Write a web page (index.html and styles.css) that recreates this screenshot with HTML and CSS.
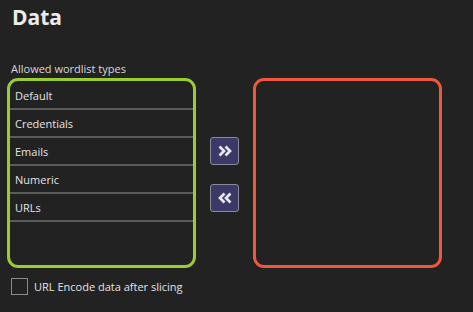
FILE: index.html
```html
<!DOCTYPE html>
<html>
<head>
<meta charset="utf-8">
<link rel="stylesheet" href="styles.css">
</head>
<body>
<div class="page">
  <h1 class="title">Data</h1>
  <div class="label">Allowed wordlist types</div>
  <div class="lists">
    <div class="box box-allowed">
      <div class="item">Default</div>
      <div class="item">Credentials</div>
      <div class="item">Emails</div>
      <div class="item">Numeric</div>
      <div class="item">URLs</div>
    </div>
    <div class="moves">
      <button class="move">
        <svg width="14" height="12" viewBox="0 0 14 12"><path d="M1.5 1.5 L6 6 L1.5 10.5 M7.5 1.5 L12 6 L7.5 10.5" fill="none" stroke="#e8e8f0" stroke-width="2.7"/></svg>
      </button>
      <button class="move">
        <svg width="14" height="12" viewBox="0 0 14 12"><path d="M6.5 1.5 L2 6 L6.5 10.5 M12.5 1.5 L8 6 L12.5 10.5" fill="none" stroke="#e8e8f0" stroke-width="2.7"/></svg>
      </button>
    </div>
    <div class="box box-denied"></div>
  </div>
  <label class="check">
    <span class="checkbox"></span>
    <span class="check-text">URL Encode data after slicing</span>
  </label>
</div>
</body>
</html>
```
FILE: styles.css
```css
html, body {
  margin: 0;
  background: #222222;
}
body {
  font-family: "Open Sans", "Noto Sans", sans-serif;
  color: #e4e4e4;
  width: 473px;
  height: 312px;
  overflow: hidden;
}
.page {
  padding: 3px 0 0 0;
}
.title {
  margin: 0 0 0 12px;
  font-size: 21px;
  font-weight: 700;
  line-height: 28px;
  color: #ececec;
}
.label {
  margin: 30px 0 0 11px;
  font-size: 11px;
  line-height: 15px;
  color: #d8d8d8;
}
.lists {
  display: flex;
  align-items: center;
  gap: 14px;
  margin: 2px 0 0 7px;
}
.box {
  box-sizing: border-box;
  width: 189px;
  height: 190px;
  border: 3px solid;
  border-radius: 11px;
  overflow: hidden;
}
.box-allowed {
  border-color: #9acd32;
  padding-top: 1px;
}
.box-denied {
  border-color: #f0583c;
}
.item {
  height: 26px;
  line-height: 27px;
  border-bottom: 2px solid #5c5c5c;
  padding-left: 5px;
  font-size: 11px;
  color: #e4e4e4;
}
.moves {
  display: flex;
  flex-direction: column;
  gap: 19px;
  margin-top: 3px;
}
.move {
  box-sizing: border-box;
  width: 29px;
  height: 28px;
  padding: 0;
  border: 1px solid #8a8a96;
  border-radius: 3px;
  background: #3b3968;
  display: flex;
  align-items: center;
  justify-content: center;
}
.move svg {
  display: block;
}
.check {
  display: flex;
  align-items: center;
  gap: 6px;
  margin: 10px 0 0 11px;
}
.checkbox {
  box-sizing: border-box;
  width: 17px;
  height: 17px;
  border: 1px solid #8a8a8a;
}
.check-text {
  font-size: 11px;
  color: #e4e4e4;
}
```
